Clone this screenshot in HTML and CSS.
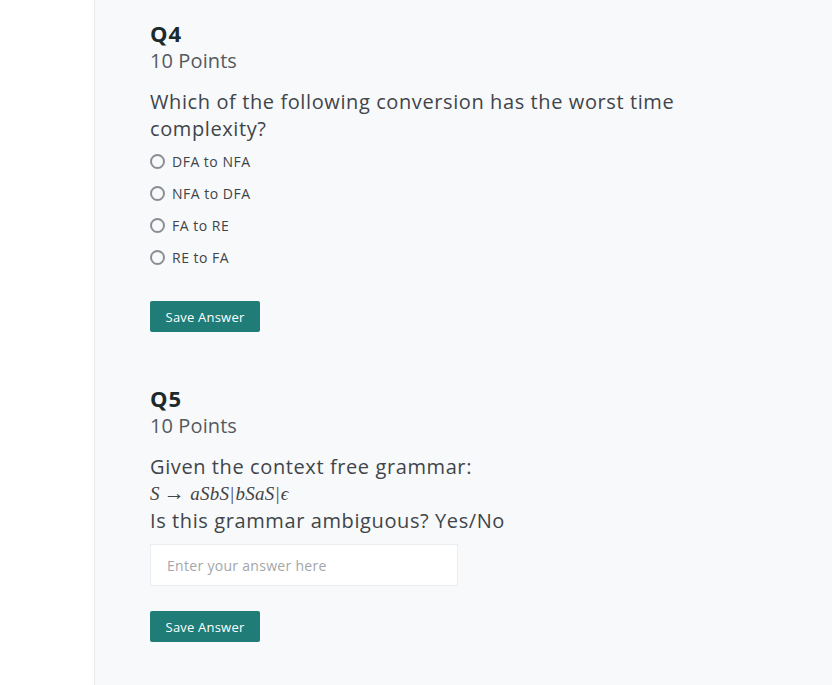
FILE: index.html
```html
<!DOCTYPE html>
<html>
<head>
<meta charset="utf-8">
<link rel="stylesheet" href="styles.css">
</head>
<body>
<div class="page">
  <aside class="sidebar"></aside>
  <main class="main">
    <section class="question">
      <h2 class="q-title">Q4</h2>
      <div class="q-points">10 Points</div>
      <div class="q-text">Which of the following conversion has the worst time complexity?</div>
      <ul class="options">
        <li class="option"><span class="radio"></span><span>DFA to NFA</span></li>
        <li class="option"><span class="radio"></span><span>NFA to DFA</span></li>
        <li class="option"><span class="radio"></span><span>FA to RE</span></li>
        <li class="option"><span class="radio"></span><span>RE to FA</span></li>
      </ul>
      <button class="save-btn">Save Answer</button>
    </section>
    <section class="question q5">
      <h2 class="q-title">Q5</h2>
      <div class="q-points">10 Points</div>
      <div class="q-text">Given the context free grammar:</div>
      <div class="math"><i>S</i><span class="arrow">→</span><i>aSbS</i><span class="bar">|</span><i>bSaS</i><span class="bar">|</span><i>ϵ</i></div>
      <div class="q-text">Is this grammar ambiguous? Yes/No</div>
      <div class="answer-box">Enter your answer here</div>
      <button class="save-btn">Save Answer</button>
    </section>
  </main>
</div>
</body>
</html>
```

FILE: styles.css
```css
html, body {
  margin: 0;
  padding: 0;
}
body {
  font-family: "Open Sans", "Liberation Sans", sans-serif;
  color: #3a3f44;
  background: #f8f9fb;
}
.page {
  display: flex;
  min-height: 685px;
}
.sidebar {
  width: 94px;
  flex: none;
  background: #ffffff;
  border-right: 1px solid #e9eaee;
}
.main {
  flex: 1;
  padding: 18px 0 0 55px;
}
.question {
  width: 600px;
}
.q5 {
  margin-top: 51px;
}
.q-title {
  margin: 0;
  font-size: 22px;
  font-weight: 700;
  letter-spacing: 1px;
  line-height: 30px;
  color: #1c2a2b;
}
.q-points {
  font-size: 20px;
  line-height: 26px;
  letter-spacing: 0.1px;
  color: #555a5e;
}
.q-text {
  font-size: 20px;
  line-height: 27px;
  letter-spacing: 0.6px;
  color: #40454a;
}
.question .q-points + .q-text {
  margin-top: 14px;
}
.options {
  list-style: none;
  margin: 3px 0 0;
  padding: 0;
}
.option {
  display: flex;
  align-items: center;
  height: 32px;
  font-size: 14px;
  letter-spacing: 0.5px;
  color: #3f4448;
}
.radio {
  width: 11px;
  height: 11px;
  border: 2px solid #8b8f93;
  border-radius: 50%;
  margin-right: 7px;
  flex: none;
}
.save-btn {
  display: block;
  margin-top: 28px;
  width: 110px;
  height: 31px;
  border: none;
  border-radius: 2px;
  background: #1f7c77;
  color: #ffffff;
  font-family: inherit;
  font-size: 13px;
  letter-spacing: 0.2px;
  padding: 0;
}
.math {
  font-family: "Liberation Serif", "DejaVu Serif", serif;
  font-size: 19px;
  line-height: 26px;
  color: #444;
  letter-spacing: 0.3px;
}
.math .arrow {
  font-style: normal;
  font-size: 21px;
  margin: 0 5px 0 4px;
}
.math .bar {
  margin: 0 1px;
}
.answer-box {
  margin-top: 10px;
  width: 290px;
  height: 40px;
  padding-left: 16px;
  background: #ffffff;
  border: 1px solid #ecedf0;
  box-sizing: content-box;
  display: flex;
  align-items: center;
  font-size: 14px;
  letter-spacing: 0.3px;
  color: #a3a6a9;
}
.q5 .save-btn {
  margin-top: 25px;
}
```
